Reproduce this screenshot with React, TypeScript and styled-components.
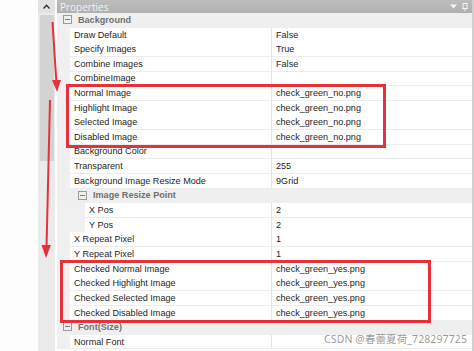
import styled, { createGlobalStyle } from "styled-components";

const GlobalStyle = createGlobalStyle`
  html, body {
    margin: 0;
    padding: 0;
    background: #ffffff;
  }
  body {
    font-family: "Liberation Sans", Arial, sans-serif;
  }
`;

const Page = styled.div`
  position: relative;
  width: 474px;
  height: 351px;
  overflow: hidden;
  display: flex;
  background: #fdfdfd;
`;

const LeftBlank = styled.div`
  width: 38px;
  flex-shrink: 0;
  background: #fdfdfd;
`;

const ScrollBar = styled.div`
  width: 17px;
  flex-shrink: 0;
  background: #ebebeb;
  display: flex;
  flex-direction: column;
  align-items: center;
`;

const ScrollArrow = styled.div`
  height: 13px;
  width: 100%;
  display: flex;
  justify-content: center;
  align-items: center;
  background: #e2e2e2;
`;

const ScrollThumb = styled.div`
  width: 14px;
  height: 146px;
  margin-top: 2px;
  background: #d3d3d3;
`;

const Panel = styled.div`
  flex: 1;
  margin-left: 2px;
  display: flex;
  flex-direction: column;
  border-right: 2px solid #d0d0d0;
`;

const TitleBar = styled.div`
  height: 13px;
  flex-shrink: 0;
  display: flex;
  align-items: center;
  justify-content: space-between;
  padding: 0 4px 0 3px;
  background: linear-gradient(#bdbdbd, #b0b0b0);
  color: #f2f2f2;
  font-family: "Open Sans", sans-serif;
  font-size: 10px;
`;

const TitleIcons = styled.div`
  display: flex;
  align-items: center;
  gap: 5px;
`;

const Row = styled.div<{ $cat: boolean }>`
  height: 14.64px;
  flex-shrink: 0;
  display: grid;
  grid-template-columns: 214px 1fr;
  background: ${(p) => (p.$cat ? "#efefef" : "#f0f0f0")};
  font-size: 9.1px;
  line-height: 14px;
`;

const NameCell = styled.div<{ $indent: number; $cat: boolean }>`
  display: flex;
  align-items: center;
  margin-left: ${(p) => p.$indent}px;
  padding-left: 4px;
  background: ${(p) => (p.$cat ? "transparent" : "#ffffff")};
  border-bottom: 1px solid ${(p) => (p.$cat ? "transparent" : "#ececec")};
  color: ${(p) => (p.$cat ? "#6f6f6f" : "#1e1e1e")};
  font-weight: ${(p) => (p.$cat ? 700 : 400)};
  white-space: nowrap;
  overflow: hidden;
`;

const ValueCell = styled.div<{ $cat: boolean }>`
  display: flex;
  align-items: center;
  padding-left: 4px;
  background: ${(p) => (p.$cat ? "transparent" : "#ffffff")};
  border-left: 1px solid ${(p) => (p.$cat ? "transparent" : "#e4e4e4")};
  border-bottom: 1px solid ${(p) => (p.$cat ? "transparent" : "#ececec")};
  color: #1e1e1e;
  white-space: nowrap;
`;

const Toggle = styled.span`
  width: 7px;
  height: 7px;
  margin-right: 6px;
  border: 1px solid #9a9a9a;
  display: inline-flex;
  align-items: center;
  justify-content: center;
  flex-shrink: 0;
  &::after {
    content: "";
    width: 5px;
    height: 1px;
    background: #7a7a7a;
  }
`;

const Frame = styled.div<{ $x: number; $y: number; $w: number; $h: number }>`
  position: absolute;
  left: ${(p) => p.$x}px;
  top: ${(p) => p.$y}px;
  width: ${(p) => p.$w}px;
  height: ${(p) => p.$h}px;
  border: 3px solid #e5323a;
  box-sizing: border-box;
  pointer-events: none;
`;

const Arrows = styled.svg`
  position: absolute;
  left: 0;
  top: 0;
  pointer-events: none;
`;

const Watermark = styled.div`
  position: absolute;
  right: 7px;
  bottom: 5px;
  font-family: "Noto Sans", "Noto Sans CJK SC", sans-serif;
  font-size: 10.5px;
  color: rgba(120, 120, 120, 0.75);
  letter-spacing: 0.1px;
`;

type Prop = { name: string; value?: string; cat?: boolean; level?: number };

const props: Prop[] = [
  { name: "Background", cat: true },
  { name: "Draw Default", value: "False" },
  { name: "Specify Images", value: "True" },
  { name: "Combine Images", value: "False" },
  { name: "CombineImage", value: "" },
  { name: "Normal Image", value: "check_green_no.png" },
  { name: "Highlight Image", value: "check_green_no.png" },
  { name: "Selected Image", value: "check_green_no.png" },
  { name: "Disabled Image", value: "check_green_no.png" },
  { name: "Background Color", value: "" },
  { name: "Transparent", value: "255" },
  { name: "Background Image Resize Mode", value: "9Grid" },
  { name: "Image Resize Point", cat: true, level: 1 },
  { name: "X Pos", value: "2", level: 1 },
  { name: "Y Pos", value: "2", level: 1 },
  { name: "X Repeat Pixel", value: "1" },
  { name: "Y Repeat Pixel", value: "1" },
  { name: "Checked Normal Image", value: "check_green_yes.png" },
  { name: "Checked Highlight Image", value: "check_green_yes.png" },
  { name: "Checked Selected Image", value: "check_green_yes.png" },
  { name: "Checked Disabled Image", value: "check_green_yes.png" },
  { name: "Font(Size)", cat: true },
  { name: "Normal Font", value: "" },
];

function App() {
  return (
    <Page>
      <GlobalStyle />
      <LeftBlank />
      <ScrollBar>
        <ScrollArrow>
          <svg width="7" height="5" viewBox="0 0 7 5">
            <path d="M0.5 4.5 L3.5 1.2 L6.5 4.5" fill="none" stroke="#333" strokeWidth="1.4" />
          </svg>
        </ScrollArrow>
        <ScrollThumb />
      </ScrollBar>
      <Panel>
        <TitleBar>
          <span>Properties</span>
          <TitleIcons>
            <svg width="7" height="5" viewBox="0 0 7 5">
              <path d="M0 0.5 H7 L3.5 4.5 Z" fill="#f4f4f4" />
            </svg>
            <svg width="6" height="8" viewBox="0 0 6 8">
              <rect x="1" y="0.5" width="4" height="5" fill="none" stroke="#f4f4f4" strokeWidth="1" />
              <path d="M0 5.5 H6 M3 5.5 V8" stroke="#f4f4f4" strokeWidth="1" />
            </svg>
          </TitleIcons>
        </TitleBar>
        {props.map((p) => {
          const cat = !!p.cat;
          const level = p.level ?? 0;
          const indent = cat ? 2 + level * 15 : 13 + level * 15;
          return (
            <Row key={p.name} $cat={cat}>
              <NameCell $indent={indent} $cat={cat}>
                {cat && <Toggle />}
                {p.name}
              </NameCell>
              <ValueCell $cat={cat}>{p.value}</ValueCell>
            </Row>
          );
        })}
      </Panel>

      <Frame $x={66} $y={84} $w={320} $h={64} />
      <Frame $x={60} $y={260} $w={371} $h={63} />

      <Arrows width="474" height="351" viewBox="0 0 474 351">
        <path d="M52.5 22 L56.5 84" stroke="#e5323a" strokeWidth="2" fill="none" />
        <path d="M52 80 L61 80 L57 92 Z" fill="#e5323a" />
        <path d="M50 100 L46.5 248" stroke="#e5323a" strokeWidth="2" fill="none" />
        <path d="M41.5 245 L51 245 L46 258 Z" fill="#e5323a" />
      </Arrows>

      <Watermark>CSDN @春蕾夏荷_728297725</Watermark>
    </Page>
  );
}

export default App;
